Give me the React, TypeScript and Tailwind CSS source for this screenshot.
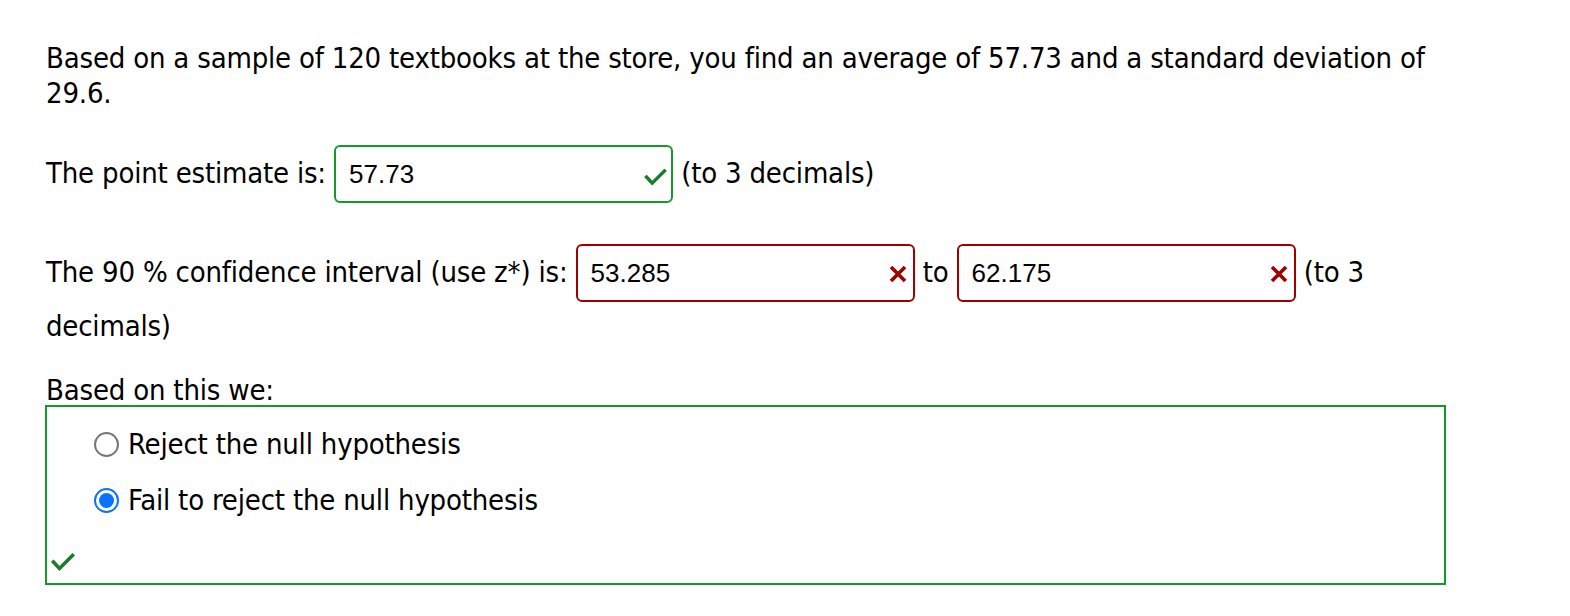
import React from 'react';

function Check({ className }: { className?: string }) {
  return (
    <svg viewBox="0 0 24 18" className={className} fill="none">
      <path d="M2.5 8.5l6 6.5L21.5 2" stroke="#1b7d2b" strokeWidth="3.6" strokeLinecap="square" />
    </svg>
  );
}

function Cross({ className }: { className?: string }) {
  return (
    <svg viewBox="0 0 18 18" className={className} fill="none">
      <path d="M2 2l14 14M16 2L2 16" stroke="#a00000" strokeWidth="3.6" />
    </svg>
  );
}

function AnswerBox({ value, ok }: { value: string; ok: boolean }) {
  return (
    <span
      className={`inline-flex items-center justify-between align-baseline w-[339px] h-[58px] rounded-[6px] border-2 pl-[13px] pr-[4px] font-['Liberation_Sans',Arial,sans-serif] text-[26px] leading-none tracking-normal ${
        ok ? 'border-[#14992a]' : 'border-[#a00000]'
      }`}
    >
      <span>{value}</span>
      {ok ? <Check className="w-[23px] h-[17px] mt-[6px]" /> : <Cross className="w-[18px] h-[18px] mr-[2px] mt-[2px]" />}
    </span>
  );
}

function Radio({ checked, label }: { checked: boolean; label: string }) {
  return (
    <label className="flex items-center gap-[9px] h-[56px] leading-[56px]">
      {checked ? (
        <span className="w-[25px] h-[25px] rounded-full border-[2.5px] border-[#0a72ff] flex items-center justify-center">
          <span className="w-[15px] h-[15px] rounded-full bg-[#0a72ff]" />
        </span>
      ) : (
        <span className="w-[25px] h-[25px] rounded-full border-[2px] border-[#767676] bg-white" />
      )}
      <span>{label}</span>
    </label>
  );
}

export default function App() {
  return (
    <div className="bg-white min-h-[616px] pl-[46px] pt-[41px] text-black font-['DejaVu_Sans_Condensed','DejaVu_Sans',Tahoma,sans-serif] text-[29px] tracking-[-0.2px] leading-[35px]">
      <div className="w-[1400px]">
        <p>
          Based on a sample of 120 textbooks at the store, you find an average of 57.73 and a standard deviation of
          29.6.
        </p>

        <p className="mt-[34px] leading-[48px]">
          The point estimate is: <AnswerBox value="57.73" ok /> (to 3 decimals)
        </p>

        <p className="mt-[41px] leading-[48px]">
          The 90 % confidence interval (use z*) is: <AnswerBox value="53.285" ok={false} /> to{' '}
          <AnswerBox value="62.175" ok={false} /> (to 3 decimals)
        </p>

        <p className="mt-[25px] leading-[30px]">Based on this we:</p>
        <div className="-ml-[1px] w-[1401px] h-[180px] border-2 border-[#14992a] pt-[9px]">
          <div className="pl-[47px]">
            <Radio checked={false} label="Reject the null hypothesis" />
            <Radio checked label="Fail to reject the null hypothesis" />
          </div>
          <Check className="mt-[25px] ml-[4px] w-[24px] h-[19px]" />
        </div>
      </div>
    </div>
  );
}
